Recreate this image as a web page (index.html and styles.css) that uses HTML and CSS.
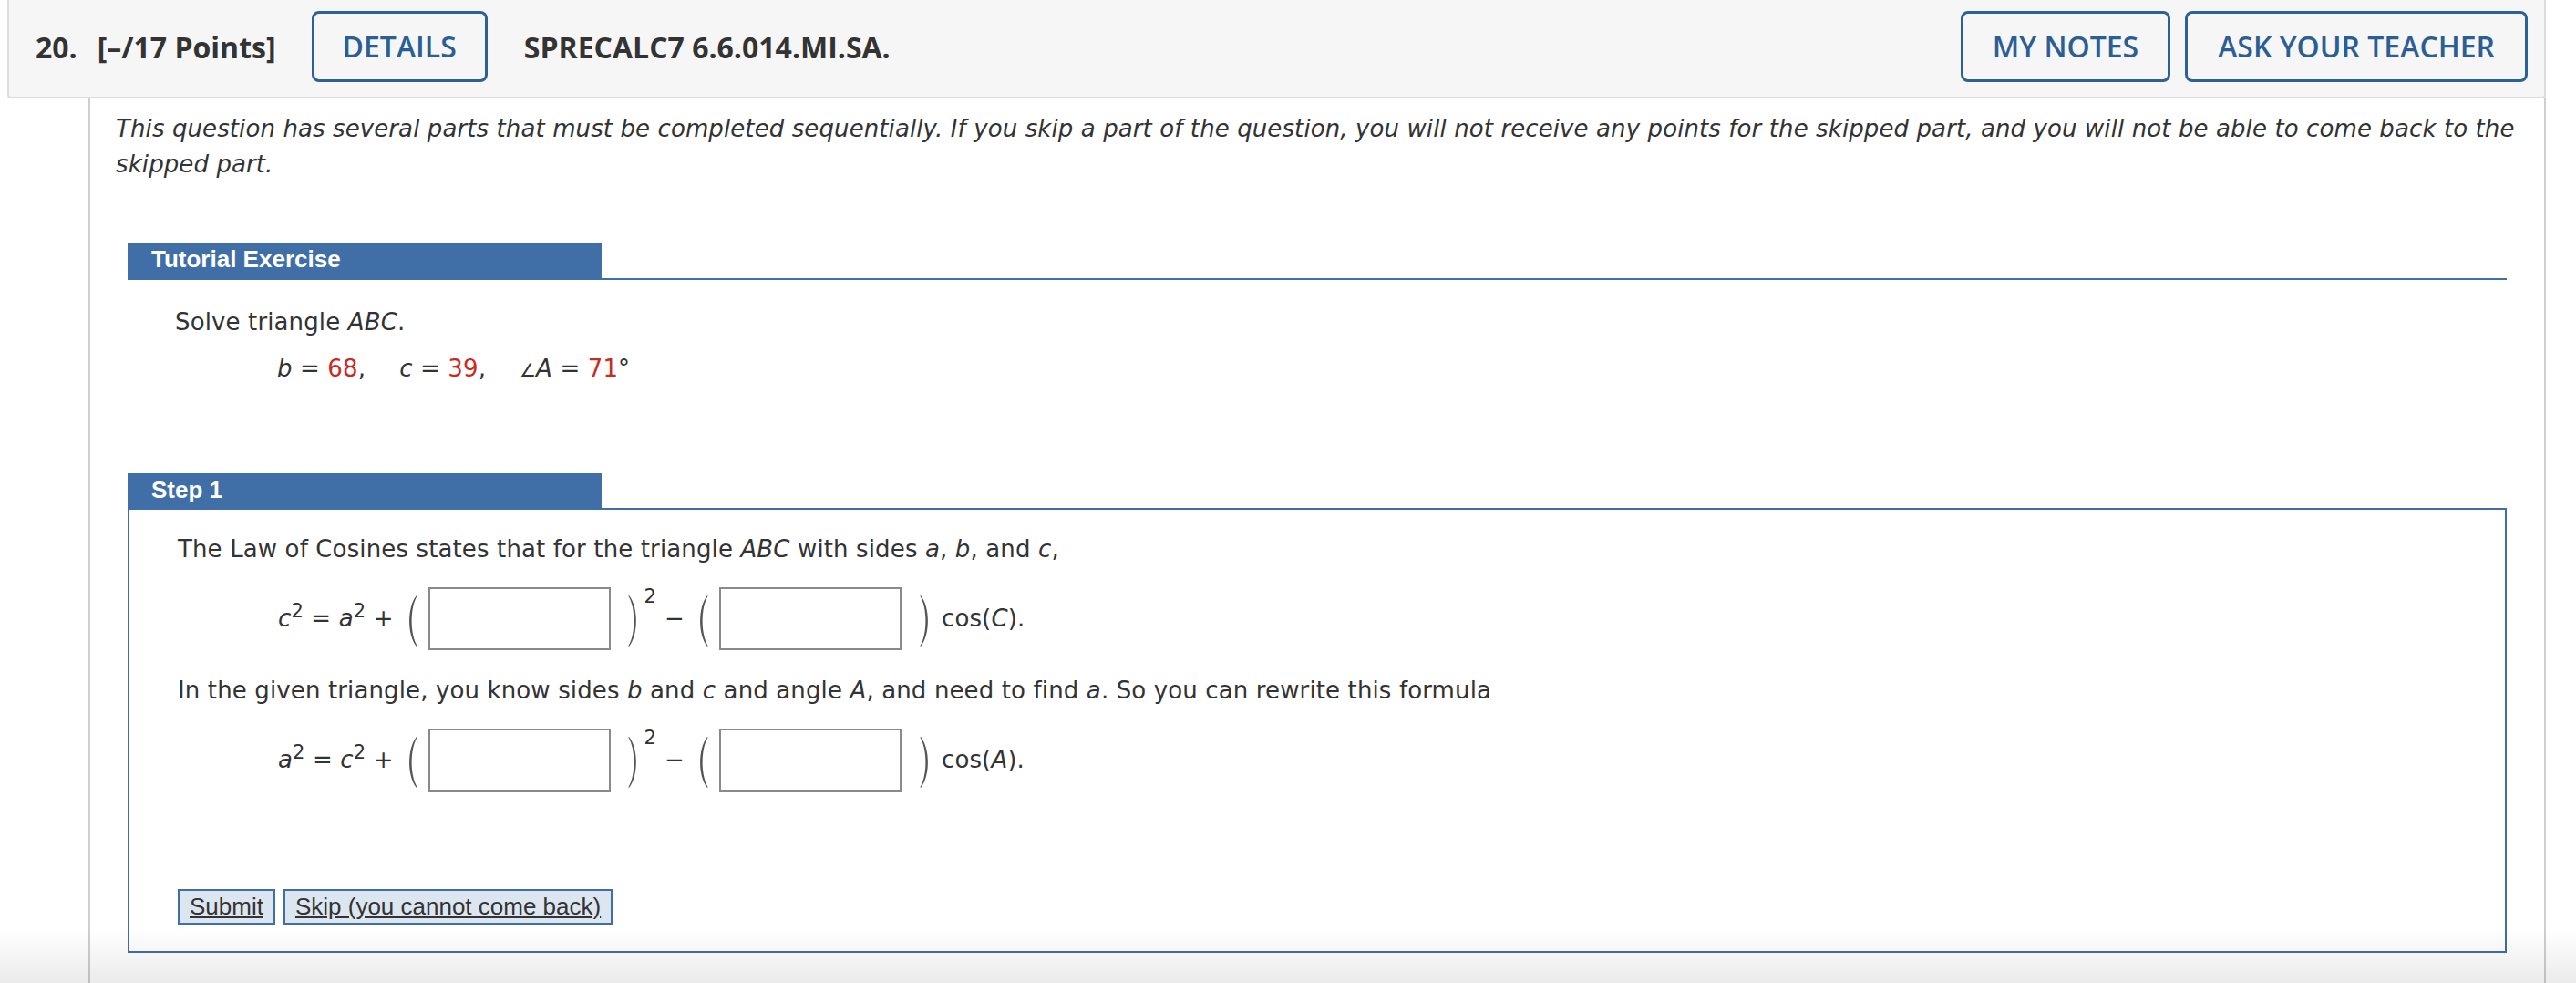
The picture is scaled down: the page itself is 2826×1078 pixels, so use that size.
FILE: index.html
```html
<!DOCTYPE html>
<html lang="en">
<head>
<meta charset="utf-8">
<title>Question 20</title>
<link rel="stylesheet" href="styles.css">
</head>
<body>
<header class="qhead">
  <div class="qtitle"><span class="qnum">20.</span><span>[–/17 Points]</span></div>
  <button class="hbtn details">DETAILS</button>
  <div class="qcode">SPRECALC7 6.6.014.MI.SA.</div>
  <div class="spacer"></div>
  <button class="hbtn notes">MY NOTES</button>
  <button class="hbtn">ASK YOUR TEACHER</button>
</header>
<main class="panel">
  <p class="intro">This question has several parts that must be completed sequentially. If you skip a part of the question, you will not receive any points for the skipped part, and you will not be able to come back to the skipped part.</p>

  <section class="tut">
    <div class="bar-row"><div class="bar">Tutorial Exercise</div></div>
    <p class="solve">Solve triangle <i>ABC</i>.</p>
    <p class="given"><span><i>b</i> = <span class="red">68</span>,</span><span class="gap"><i>c</i> = <span class="red">39</span>,</span><span class="gap"><span class="ang">∠</span><i>A</i> = <span class="red">71</span>°</span></p>
  </section>

  <section class="step">
    <div class="bar step-bar">Step 1</div>
    <div class="stepbox">
      <p class="line">The Law of Cosines states that for the triangle <i>ABC</i> with sides <i>a</i>, <i>b</i>, and <i>c</i>,</p>
      <div class="formula">
        <span class="lhs"><i>c</i><sup>2</sup> = <i>a</i><sup>2</sup> +</span>
        <svg class="paren p-open" viewBox="0 0 14 58" width="14" height="58"><path d="M13 1 C2.5 13.5 2.5 44.5 13 57 L13.6 56.2 C5.6 43.5 5.6 14.5 13.6 1.8 Z"/></svg>
        <input class="blank" type="text" aria-label="blank 1">
        <svg class="paren p-close" viewBox="0 0 14 58" width="14" height="58"><path d="M1 1 C11.5 13.5 11.5 44.5 1 57 L0.4 56.2 C8.4 43.5 8.4 14.5 0.4 1.8 Z"/></svg>
        <span class="sq">2</span>
        <span class="minus">−</span>
        <svg class="paren p-open2" viewBox="0 0 14 58" width="14" height="58"><path d="M13 1 C2.5 13.5 2.5 44.5 13 57 L13.6 56.2 C5.6 43.5 5.6 14.5 13.6 1.8 Z"/></svg>
        <input class="blank" type="text" aria-label="blank 2">
        <svg class="paren p-close2" viewBox="0 0 14 58" width="14" height="58"><path d="M1 1 C11.5 13.5 11.5 44.5 1 57 L0.4 56.2 C8.4 43.5 8.4 14.5 0.4 1.8 Z"/></svg>
        <span class="cos">cos(<i>C</i>).</span>
      </div>
      <p class="line line2">In the given triangle, you know sides <i>b</i> and <i>c</i> and angle <i>A</i>, and need to find <i>a</i>. So you can rewrite this formula</p>
      <div class="formula">
        <span class="lhs"><i>a</i><sup>2</sup> = <i>c</i><sup>2</sup> +</span>
        <svg class="paren p-open" viewBox="0 0 14 58" width="14" height="58"><path d="M13 1 C2.5 13.5 2.5 44.5 13 57 L13.6 56.2 C5.6 43.5 5.6 14.5 13.6 1.8 Z"/></svg>
        <input class="blank" type="text" aria-label="blank 3">
        <svg class="paren p-close" viewBox="0 0 14 58" width="14" height="58"><path d="M1 1 C11.5 13.5 11.5 44.5 1 57 L0.4 56.2 C8.4 43.5 8.4 14.5 0.4 1.8 Z"/></svg>
        <span class="sq">2</span>
        <span class="minus">−</span>
        <svg class="paren p-open2" viewBox="0 0 14 58" width="14" height="58"><path d="M13 1 C2.5 13.5 2.5 44.5 13 57 L13.6 56.2 C5.6 43.5 5.6 14.5 13.6 1.8 Z"/></svg>
        <input class="blank" type="text" aria-label="blank 4">
        <svg class="paren p-close2" viewBox="0 0 14 58" width="14" height="58"><path d="M1 1 C11.5 13.5 11.5 44.5 1 57 L0.4 56.2 C8.4 43.5 8.4 14.5 0.4 1.8 Z"/></svg>
        <span class="cos">cos(<i>A</i>).</span>
      </div>
      <div class="actions">
        <button class="abtn">Submit</button>
        <button class="abtn">Skip (you cannot come back)</button>
      </div>
    </div>
  </section>
</main>
<div class="fade"></div>
</body>
</html>
```

FILE: styles.css
```css
html {
  overflow: hidden;
  background: #fff;
}

body {
  margin: 0 33px 0 8px;
  font-family: "DejaVu Sans", Verdana, sans-serif;
  color: #333;
}

/* ---------- header ---------- */
.qhead {
  box-sizing: border-box;
  height: 108px;
  display: flex;
  align-items: center;
  padding: 0 18px 4px 29px;
  background: #f6f6f6;
  border: 2px solid #dcdcdc;
  border-top: none;
  border-radius: 0 0 4px 4px;
  font-family: "Open Sans", sans-serif;
}

.qtitle {
  font-weight: 700;
  font-size: 32px;
  color: #333;
  white-space: nowrap;
}

.qnum {
  margin-right: 22px;
}

.hbtn {
  box-sizing: border-box;
  height: 78px;
  padding: 0 33px;
  border: 3px solid #2c6195;
  border-radius: 8px;
  background: transparent;
  font-family: "Open Sans", sans-serif;
  font-size: 32px;
  font-weight: 600;
  color: #2b5f94;
  line-height: 72px;
  white-space: nowrap;
}

.details {
  margin-left: 39px;
  padding: 0 31px;
}

.qcode {
  margin-left: 40px;
  font-weight: 700;
  font-size: 32px;
  color: #333;
  white-space: nowrap;
}

.spacer {
  flex: 1;
}

.notes {
  margin-right: 16px;
  padding: 0 32px;
}

/* ---------- panel ---------- */
.panel {
  display: block;
  margin-left: 89px;
  padding: 14px 28px 120px 28px;
  border-left: 2px solid #cfcfcf;
  border-right: 2px solid #cfcfcf;
  font-size: 26px;
  line-height: 39px;
  letter-spacing: 0.13px;
}

.intro {
  margin: 0 -12px 0 0;
  font-style: italic;
  letter-spacing: 0.1px;
}

i {
  font-style: italic;
}

.tut {
  margin: 66px 13px 0 13px;
}

.bar-row {
  border-bottom: 2px solid #406ea7;
}

.bar {
  box-sizing: border-box;
  width: 520px;
  height: 39px;
  padding-left: 26px;
  background: #406ea7;
  color: #fff;
  font-family: "Liberation Sans", Arial, sans-serif;
  font-weight: 700;
  font-size: 26px;
  line-height: 36px;
  letter-spacing: 0;
}

.step-bar {
  height: 38px;
}

.solve {
  margin: 27px 0 0 52px;
}

.given {
  margin: 12px 0 0 164px;
}

.gap {
  margin-left: 37px;
}

.red {
  color: #cc2a1f;
}

.ang {
  font-size: 20px;
}

.step {
  margin: 93px 13px 0 13px;
}

.stepbox {
  border: 2px solid #406ea7;
  padding: 24px 0 29px 53px;
}

.line {
  margin: 0;
}

.line2 {
  margin-top: 25px;
}

.formula {
  display: flex;
  align-items: center;
  height: 69px;
  margin: 22px 0 0 110px;
}

.lhs {
  white-space: pre;
}

sup {
  font-size: 21px;
  line-height: 0;
}

.paren {
  fill: #555;
  margin-top: 4px;
  flex: none;
}

.p-open {
  margin-left: 12px;
}

.blank {
  box-sizing: border-box;
  width: 200px;
  height: 69px;
  margin: 0 0 0 12px;
  padding: 0;
  border: 2px solid #8a8a8a;
  background: #fff;
  flex: none;
}

.p-close {
  margin-left: 19px;
}

.sq {
  align-self: flex-start;
  margin: 0 0 0 4px;
  font-size: 21px;
  line-height: 21px;
}

.minus {
  margin-left: 9px;
}

.p-open2 {
  margin-left: 12px;
}

.p-close2 {
  margin-left: 20px;
}

.cos {
  margin-left: 10px;
}

.actions {
  display: flex;
  gap: 9px;
  margin-top: 107px;
}

.abtn {
  box-sizing: border-box;
  height: 39px;
  padding: 0 11px;
  border: 2px solid #406ea7;
  background: #dce6f1;
  font-family: "Liberation Sans", Arial, sans-serif;
  font-size: 26px;
  line-height: 35px;
  color: #333;
  letter-spacing: 0;
  text-decoration: underline;
}

/* bottom edge shading of the captured window */
.fade {
  position: fixed;
  left: 0;
  right: 0;
  bottom: 0;
  height: 60px;
  background: linear-gradient(to bottom, rgba(0, 0, 0, 0), rgba(0, 0, 0, 0.08));
  pointer-events: none;
}
```
